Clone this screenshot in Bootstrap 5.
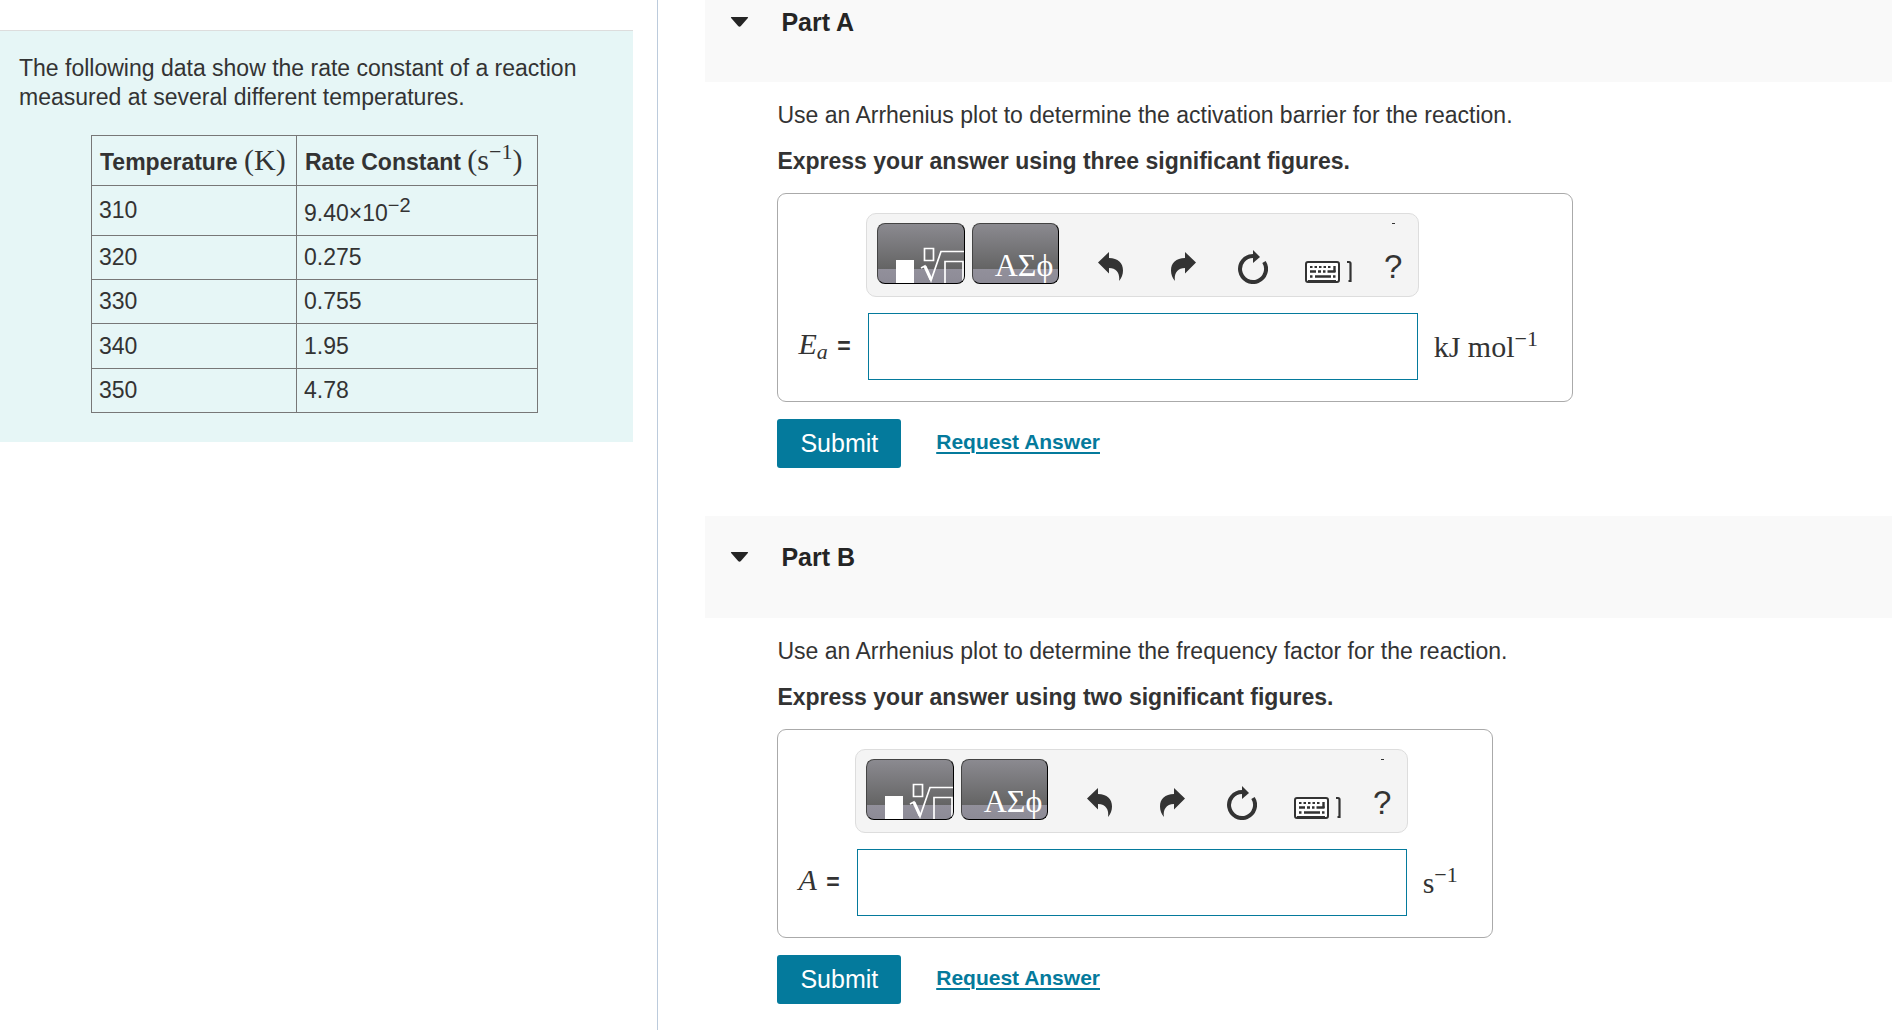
<!DOCTYPE html>
<html lang="en">
<head>
<meta charset="utf-8">
<meta name="viewport" content="width=device-width, initial-scale=1">
<title>Arrhenius plot</title>
<link href="https://cdn.jsdelivr.net/npm/bootstrap@5.3.0/dist/css/bootstrap.min.css" rel="stylesheet">
<style>
  body { font-family: "Liberation Sans", Arial, sans-serif; font-size: 23px; line-height: 29px; color: #333; background: #fff; }
  .side { flex: 0 0 34.8%; border-right: 1px solid #bccbdc; padding: 30px 24px 0 0; }
  .intro { background: #e6f6f6; border-top: 1px solid #ddd; padding: 23px 19px 29px; }
  .intro p { margin-bottom: 23px; }
  .rates { margin-left: 72px; border-collapse: collapse; }
  .rates th, .rates td { border: 1px solid #777; padding: 0 7px; height: 44px; white-space: nowrap; }
  .rates th { padding: 0 8px; }
  .rates th:first-child { width: 205px; }
  .rates th:last-child { width: 241px; }
  .rates .tall > * { height: 50px; }
  .rates .mid > * { height: 45px; }
  .serif { font-family: "Liberation Serif", "Times New Roman", serif; font-size: 30px; font-weight: 400; line-height: 29px; }
  .serif sup, .serif sub { font-size: 22px; line-height: 0; }
  .rates td sup { font-size: 20px; line-height: 25px; vertical-align: super; top: 0; }
  .parts { padding-left: 47px; min-width: 0; }
  .part-head { background: #f9f9f9; height: 102px; padding: 27px 25px 0; color: #252525; }
  .part-first { height: 82px; padding-top: 8px; }
  .part-head h2 { font-size: 25px; line-height: 29px; margin: 0 0 0 32px; font-weight: 700; }
  .fold { width: 19px; height: 29px; }
  .part-body { padding: 19px 24px 0 72px; min-height: 434px; }
  .part-body p { margin-bottom: 17px; }
  .answer { grid-template-columns: auto minmax(0, 553px) auto; column-gap: 15px; row-gap: 16px; border: 1px solid #aaa; border-radius: 9px; padding: 19px 34px 21px 20px; width: fit-content; max-width: 100%; align-items: center; }
  .tools { grid-column: 2; grid-row: 1; height: 84px; padding: 9px 2px 0 10px; background: #f4f4f4; border: 1px solid #ddd; border-radius: 10px; align-items: flex-start; }
  .tools button { padding: 0; background: none; border: 0; color: #333; height: 61px; display: flex; align-items: flex-end; justify-content: center; }
  .tools .pad { width: 88px; margin-right: 7px; border: 1px solid #000; border-top-color: #444; border-left-color: #444; border-radius: 8px; overflow: hidden; background: linear-gradient(#8b8a90, #646464 76%, #92909b 76%, #8d8b96); color: #fff; justify-content: flex-end; }
  .tools .greek { font-family: "Liberation Serif", serif; font-size: 32px; line-height: 36px; padding-right: 5px; }
  .w-arrow { width: 73px; } .w-reset { width: 66px; } .w-keys { width: 85px; } .w-help { width: 45px; }
  .tools .w-help { font-size: 33px; line-height: 34px; flex-direction: column; justify-content: space-between; align-items: center; }
  .tools .undo { margin-left: 8px; }
  .answer label, .answer .unit { grid-row: 2; }
  .answer label { margin-bottom: 4px; }
  .field { grid-column: 2; grid-row: 2; height: 67px; width: 550px; max-width: 100%; margin-left: 2px; border: 1px solid #047a9c; border-radius: 0; }
  .eq { font-family: "Liberation Sans", sans-serif; font-size: 23px; font-weight: 700; margin-left: 2px; }
  .actions { margin-top: 17px; gap: 35px; }
  .btn-send { background: #047a9c; color: #fff; font-size: 25px; line-height: 29px; padding: 10px 23px; border: 0; border-radius: 3px; }
  .ask { color: #047a9c; font-size: 21px; font-weight: 700; margin-bottom: 4px; text-underline-offset: 3px; text-decoration-thickness: 2px; }
</style>
<script src="https://cdn.jsdelivr.net/npm/bootstrap@5.3.0/dist/js/bootstrap.bundle.min.js"></script>
</head>
<body>
<svg class="d-none" aria-hidden="true">
  <symbol id="i-fold" viewBox="0 0 19 29"><path d="M1.500 9h16q1 0 .4.9l-7 8q-1.400 1.500-2.800 0l-7-8q-.6-.9.4-.9z" fill="currentColor"/></symbol>
  <symbol id="i-root" viewBox="0 0 68 36"><path d="M0 13h18v23H0z" fill="#fff"/><path d="M28.500 1.500h9v12h-9z M25 21l4-2 6 14.500L45 4.500h23 M49 36V14.500h18V36" fill="none" stroke="#fff" stroke-width="1.700"/><path d="M29 19.500l6 13" stroke="#fff" stroke-width="3"/></symbol>
  <symbol id="i-undo" viewBox="0 0 25 34"><path d="M0 12.500L11 2v6c9 .2 14 4.800 14 12.500 0 4-1.500 7.500-4 10.500 1.200-7-2-13-10-13v5.500z" fill="currentColor"/></symbol>
  <symbol id="i-reset" viewBox="0 0 30 34"><path d="M15 6a13 13 0 1 0 11 6" fill="none" stroke="currentColor" stroke-width="4"/><path d="M15 0l7 7-7 6z" fill="currentColor"/></symbol>
  <symbol id="i-keys" viewBox="0 0 47 34"><rect x="1" y="12" width="33" height="20" rx="2" fill="#fff" stroke="currentColor" stroke-width="2"/><path d="M3 31h28" stroke="currentColor" stroke-width="2"/><path d="M5 17h22" stroke="currentColor" stroke-width="2.200" stroke-dasharray="2.500 2"/><path d="M5 21.500h6M13 21.500h3M18 21.500h2.500M22.500 21.500h8" stroke="currentColor" stroke-width="2.400"/><path d="M29.500 16v6" stroke="currentColor" stroke-width="2.400"/><path d="M5 26.500h2.500M10 26.500h16M28 26.500h2.500" stroke="currentColor" stroke-width="2.400"/><path d="M42 12h2q1.500 0 1.500 1.500V31h-2" fill="none" stroke="currentColor" stroke-width="2.200"/></symbol>
</svg>
<div class="d-flex min-vh-100">
  <aside class="side">
    <div class="intro">
      <p>The following data show the rate constant of a reaction measured at several different temperatures.</p>
      <table class="rates">
        <thead><tr class="tall"><th>Temperature <span class="serif">(K)</span></th><th>Rate Constant <span class="serif">(s<sup>−1</sup>)</span></th></tr></thead>
        <tbody>
          <tr class="tall"><td>310</td><td>9.40×10<sup>−2</sup></td></tr>
          <tr><td>320</td><td>0.275</td></tr>
          <tr><td>330</td><td>0.755</td></tr>
          <tr class="mid"><td>340</td><td>1.95</td></tr>
          <tr><td>350</td><td>4.78</td></tr>
        </tbody>
      </table>
    </div>
  </aside>
  <main class="parts flex-grow-1">
    <section>
      <div class="part-head part-first d-flex align-items-start"><svg class="fold"><use href="#i-fold"/></svg><h2>Part A</h2></div>
      <div class="part-body">
        <p>Use an Arrhenius plot to determine the activation barrier for the reaction.</p>
        <p class="fw-bold">Express your answer using three significant figures.</p>
        <div class="answer d-grid">
          <div class="tools d-flex">
            <button type="button" class="pad" aria-label="Templates"><svg width="68" height="36"><use href="#i-root"/></svg></button>
            <button type="button" class="pad"><span class="greek">ΑΣϕ</span></button>
            <button type="button" class="w-arrow undo" aria-label="Undo"><svg width="25" height="34"><use href="#i-undo"/></svg></button>
            <button type="button" class="w-arrow" aria-label="Redo"><svg width="25" height="34"><use href="#i-undo" transform="matrix(-1 0 0 1 25 0)"/></svg></button>
            <button type="button" class="w-reset" aria-label="Reset"><svg width="30" height="34"><use href="#i-reset"/></svg></button>
            <button type="button" class="w-keys" aria-label="Keyboard shortcuts"><svg width="47" height="34"><use href="#i-keys"/></svg></button>
            <button type="button" class="w-help"><svg width="3" height="2"><path d="M0 .5h3" stroke="#333"/></svg><span>?</span></button>
          </div>
          <label for="ans-a" class="serif"><i>E<sub>a</sub></i> <span class="eq">=</span></label>
          <input id="ans-a" type="text" class="field form-control">
          <span class="serif unit">kJ mol<sup>−1</sup></span>
        </div>
        <div class="actions d-flex align-items-center"><button type="button" class="btn btn-send">Submit</button><a class="ask" href="#">Request Answer</a></div>
      </div>
    </section>
    <section>
      <div class="part-head d-flex align-items-start"><svg class="fold"><use href="#i-fold"/></svg><h2>Part B</h2></div>
      <div class="part-body pb-0">
        <p>Use an Arrhenius plot to determine the frequency factor for the reaction.</p>
        <p class="fw-bold">Express your answer using two significant figures.</p>
        <div class="answer d-grid">
          <div class="tools d-flex">
            <button type="button" class="pad" aria-label="Templates"><svg width="68" height="36"><use href="#i-root"/></svg></button>
            <button type="button" class="pad"><span class="greek">ΑΣϕ</span></button>
            <button type="button" class="w-arrow undo" aria-label="Undo"><svg width="25" height="34"><use href="#i-undo"/></svg></button>
            <button type="button" class="w-arrow" aria-label="Redo"><svg width="25" height="34"><use href="#i-undo" transform="matrix(-1 0 0 1 25 0)"/></svg></button>
            <button type="button" class="w-reset" aria-label="Reset"><svg width="30" height="34"><use href="#i-reset"/></svg></button>
            <button type="button" class="w-keys" aria-label="Keyboard shortcuts"><svg width="47" height="34"><use href="#i-keys"/></svg></button>
            <button type="button" class="w-help"><svg width="3" height="2"><path d="M0 .5h3" stroke="#333"/></svg><span>?</span></button>
          </div>
          <label for="ans-b" class="serif"><i>A</i> <span class="eq">=</span></label>
          <input id="ans-b" type="text" class="field form-control">
          <span class="serif unit">s<sup>−1</sup></span>
        </div>
        <div class="actions d-flex align-items-center"><button type="button" class="btn btn-send">Submit</button><a class="ask" href="#">Request Answer</a></div>
      </div>
    </section>
  </main>
</div>
</body>
</html>
